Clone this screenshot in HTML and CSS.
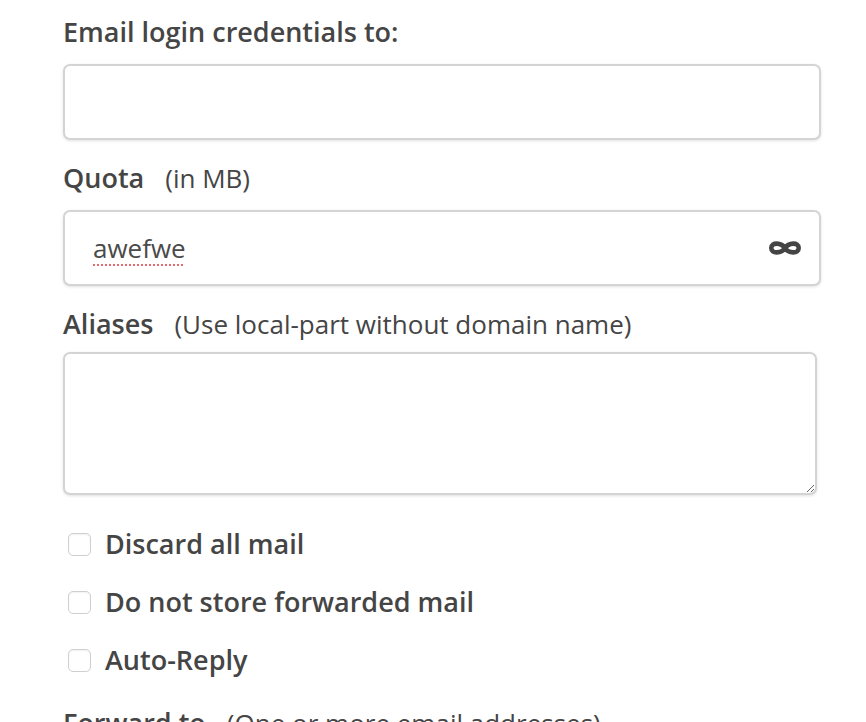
FILE: index.html
```html
<!DOCTYPE html>
<html>
<head>
<meta charset="utf-8">
<link rel="stylesheet" href="styles.css">
</head>
<body>
<form class="form">
  <div class="field">
    <label class="label">Email login credentials to:</label>
    <input class="input" type="text">
  </div>
  <div class="field">
    <label class="label">Quota <span class="hint">(in MB)</span></label>
    <div class="input input-icon">
      <span class="value">awefwe</span>
      <svg class="infinity" width="34" height="16" viewBox="0 0 34 16"><path d="M17 8 C13.4 2.4, 3.3 1.9, 3.3 8 C3.3 14.1, 13.4 13.6, 17 8 C20.6 2.4, 30.7 1.9, 30.7 8 C30.7 14.1, 20.6 13.6, 17 8Z" fill="none" stroke="#444" stroke-width="4.6"/></svg>
    </div>
  </div>
  <div class="field">
    <label class="label label-tight">Aliases <span class="hint">(Use local-part without domain name)</span></label>
    <textarea class="textarea"></textarea>
  </div>
  <div class="checks">
    <label class="check"><input type="checkbox" class="box"><span>Discard all mail</span></label>
    <label class="check"><input type="checkbox" class="box"><span>Do not store forwarded mail</span></label>
    <label class="check"><input type="checkbox" class="box"><span>Auto-Reply</span></label>
  </div>
  <div class="field">
    <label class="label">Forward to <span class="hint">(One or more email addresses)</span></label>
  </div>
</form>
</body>
</html>
```
FILE: styles.css
```css
html, body {
  margin: 0;
  padding: 0;
  background: #fff;
}
body {
  font-family: "Open Sans", "Noto Sans", sans-serif;
  color: #454545;
  overflow: hidden;
  height: 722px;
}
.form {
  padding: 14px 45px 0 63px;
  display: flex;
  flex-direction: column;
}
.field {
  display: flex;
  flex-direction: column;
  margin-bottom: 20px;
}
.label {
  font-size: 27px;
  line-height: 36px;
  font-weight: 600;
  margin-bottom: 14px;
}
.label-tight {
  margin-bottom: 10px;
}
.hint {
  font-weight: 400;
  font-size: 26px;
  margin-left: 14px;
}
.input {
  box-sizing: border-box;
  width: 758px;
  height: 76px;
  border: 2px solid #d4d4d4;
  border-radius: 7px;
  box-shadow: 0 1px 3px rgba(0,0,0,0.12);
  background: #fff;
  font-family: inherit;
  font-size: 26px;
  padding: 0 28px;
  outline: none;
}
.input-icon {
  display: flex;
  align-items: center;
  justify-content: space-between;
  padding: 0 17px 0 28px;
}
.value {
  color: #4a4a4a;
  text-decoration: underline dotted #e86a6a;
  text-decoration-thickness: 2px;
  text-underline-offset: 6px;
}
.infinity {
  display: block;
}
.textarea {
  box-sizing: border-box;
  width: 754px;
  height: 143px;
  border: 2px solid #d4d4d4;
  border-radius: 7px;
  box-shadow: 0 1px 3px rgba(0,0,0,0.12);
  font-family: inherit;
  font-size: 24px;
  resize: vertical;
  outline: none;
}
.checks {
  display: flex;
  flex-direction: column;
  gap: 22px;
  margin-top: 11px;
  margin-bottom: 27px;
}
.check {
  display: flex;
  align-items: center;
  gap: 14px;
  font-size: 27px;
  line-height: 36px;
  font-weight: 600;
  padding-left: 5px;
}
.box {
  appearance: none;
  -webkit-appearance: none;
  margin: 0;
  width: 23px;
  height: 23px;
  border: 1px solid #cfcfcf;
  border-radius: 5px;
  background: #fff;
  box-shadow: inset 0 1px 2px rgba(0,0,0,0.06);
}
```
